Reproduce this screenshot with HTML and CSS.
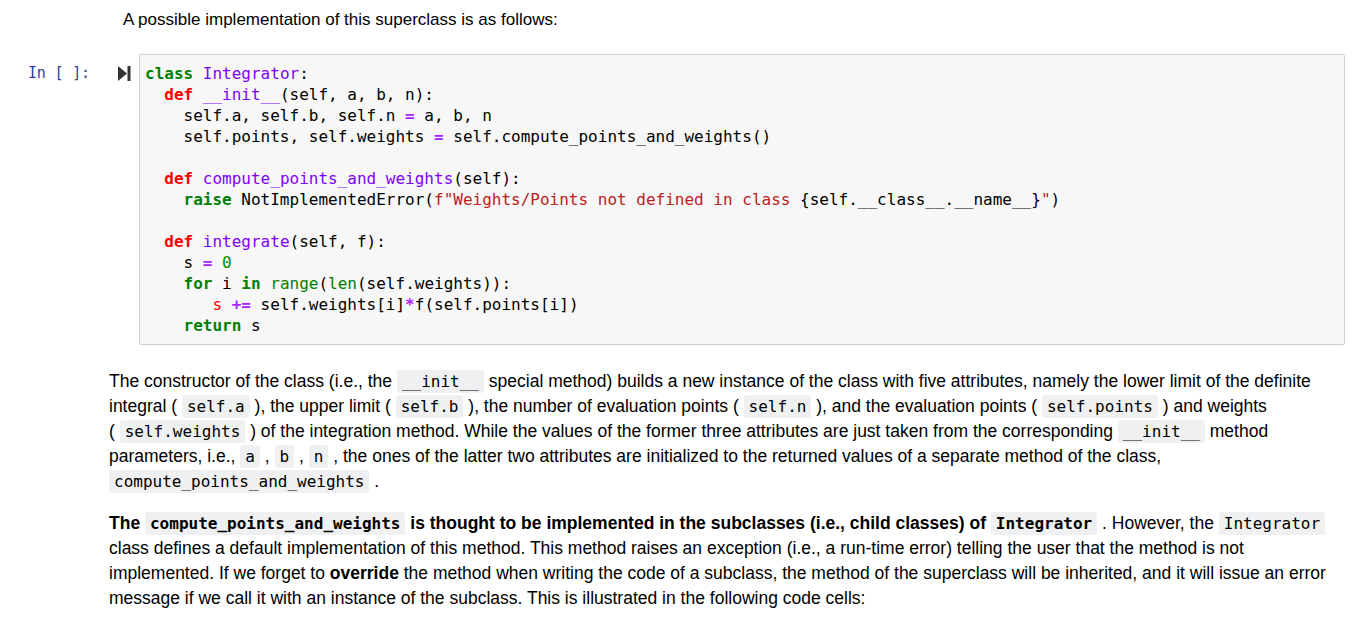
FILE: index.html
```html
<!DOCTYPE html>
<html>
<head>
<meta charset="utf-8">
<link rel="stylesheet" href="styles.css">
</head>
<body>
<div class="notebook">
  <div class="md-cell intro">
    <p>A possible implementation of this superclass is as follows:</p>
  </div>

  <div class="code-cell">
    <div class="prompt">In&nbsp;[&nbsp;]:</div>
    <div class="run">
      <svg width="13" height="15" viewBox="0 0 13 15"><path d="M0 0 L9 7.5 L0 15 Z" fill="#333"/><rect x="9.5" y="0" width="3" height="15" fill="#333"/></svg>
    </div>
    <pre class="input"><span class="kw">class</span> <span class="df">Integrator</span>:
  <span class="dk">def</span> <span class="df">__init__</span>(self, a, b, n):
    self.a, self.b, self.n <span class="op">=</span> a, b, n
    self.points, self.weights <span class="op">=</span> self.compute_points_and_weights()

  <span class="dk">def</span> <span class="df">compute_points_and_weights</span>(self):
    <span class="kw">raise</span> NotImplementedError(<span class="st">f"Weights/Points not defined in class </span>{self.__class__.__name__}<span class="st">"</span>)

  <span class="dk">def</span> <span class="df">integrate</span>(self, f):
    s <span class="op">=</span> <span class="nm">0</span>
    <span class="kw">for</span> i <span class="kw">in</span> <span class="bi">range</span>(<span class="bi">len</span>(self.weights)):
       <span class="v2">s</span> <span class="op">+=</span> self.weights[i]<span class="op">*</span>f(self.points[i])
    <span class="kw">return</span> s</pre>
  </div>

  <div class="md-cell">
    <p>The constructor of the class (i.e., the <code>__init__</code> special method) builds a new instance of the class with five attributes, namely the lower limit of the definite integral (&nbsp;<code>self.a</code>&nbsp;), the upper limit (&nbsp;<code>self.b</code>&nbsp;), the number of evaluation points (&nbsp;<code>self.n</code>&nbsp;), and the evaluation points (&nbsp;<code>self.points</code>&nbsp;) and weights (&nbsp;<code>self.weights</code>&nbsp;) of the integration method. While the values of the former three attributes are just taken from the corresponding <code>__init__</code> method parameters, i.e., <code>a</code> , <code>b</code> , <code>n</code> , the ones of the latter two attributes are initialized to the returned values of a separate method of the class, <code>compute_points_and_weights</code>&nbsp;.</p>
    <p><strong>The <code>compute_points_and_weights</code> is thought to be implemented in the subclasses (i.e., child classes) of <code>Integrator</code></strong>&nbsp;. However, the <code>Integrator</code> class defines a default implementation of this method. This method raises an exception (i.e., a run-time error) telling the user that the method is not implemented. If we forget to <strong>override</strong> the method when writing the code of a subclass, the method of the superclass will be inherited, and it will issue an error message if we call it with an instance of the subclass. This is illustrated in the following code cells:</p>
  </div>
</div>
</body>
</html>
```

FILE: styles.css
```css
html, body {
  margin: 0;
  padding: 0;
  background: #fff;
}

body {
  font-family: "Liberation Sans", Arial, sans-serif;
  font-size: 17.5px;
  line-height: 25px;
  color: #000;
}

.notebook {
  width: 1345px;
}

.md-cell {
  padding-left: 109px;
  width: 1226px;
}

.md-cell p {
  margin: 0 0 17px 0;
}

.intro {
  padding-top: 7px;
}

.intro p {
  margin: 0 0 22px 14px;
  font-size: 17px;
}

.code-cell {
  display: flex;
  align-items: flex-start;
  margin-bottom: 24px;
}

.prompt {
  width: 92px;
  padding-left: 28px;
  box-sizing: border-box;
  margin-top: 9px;
  font-family: "DejaVu Sans Mono", monospace;
  font-size: 15px;
  line-height: 21px;
  color: #303f9f;
  letter-spacing: -0.2px;
}

.run {
  width: 47px;
  padding-left: 26px;
  box-sizing: border-box;
  margin-top: 12px;
  line-height: 0;
}

.input {
  flex: 1;
  margin: 0;
  padding: 8px 5px 8px 5px;
  background: #f7f7f7;
  border: 1px solid #cfcfcf;
  border-radius: 2px;
  font-family: "DejaVu Sans Mono", monospace;
  font-size: 16px;
  line-height: 21px;
  color: #000;
  white-space: pre;
}

.kw { color: #008000; font-weight: bold; }
.dk { color: #ff0000; font-weight: bold; }
.df { color: #8000ff; }
.op { color: #aa22ff; font-weight: bold; }
.st { color: #ba2121; }
.nm { color: #008800; }
.bi { color: #008000; }
.v2 { color: #ff0000; }

code {
  font-family: "DejaVu Sans Mono", monospace;
  font-size: 16px;
  background: #eff0f1;
  padding: 2px 5px;
  border-radius: 3px;
  color: #000;
}

strong code {
  font-weight: bold;
}
```
